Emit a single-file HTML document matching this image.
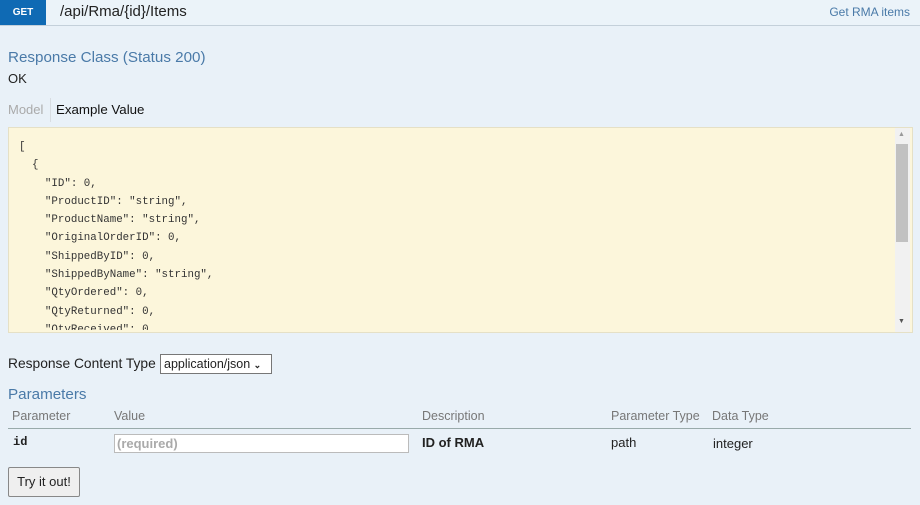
<!DOCTYPE html>
<html><head><style>
body{margin:0;width:920px;height:505px;background:#e9f1f8;font-family:"Liberation Sans",sans-serif;position:relative;overflow:hidden;color:#222}
.a{position:absolute;white-space:nowrap}
.code{font-family:"Liberation Mono",monospace;font-size:10.8px;color:#333;line-height:18.3px}
.h{color:#4a7aa8;font-size:15.2px}
.th{color:#777;font-size:12.5px}
</style></head><body>
<div class="a" style="left:0;top:0;width:920px;height:25px;background:#ebf3f9;border-bottom:1px solid #c4d0da"></div>
<div class="a" style="left:0;top:0;width:46px;height:25px;background:#0f6ab4;color:#fff;font-size:10px;font-weight:bold;line-height:25px;text-align:center">GET</div>
<div class="a" style="left:60px;top:3px;font-size:15px;color:#222">/api/Rma/{id}/Items</div>
<div class="a" style="right:10px;top:5px;font-size:12px;color:#4a7aa8">Get RMA items</div>
<div class="a h" style="left:8px;top:49px">Response Class (Status 200)</div>
<div class="a" style="left:8px;top:71px;font-size:13px">OK</div>
<div class="a" style="left:8px;top:102px;font-size:13px;color:#aaa">Model</div>
<div class="a" style="left:50px;top:98px;width:1px;height:24px;background:#d8dde2"></div>
<div class="a" style="left:56px;top:102px;font-size:13.3px;color:#111">Example Value</div>
<div class="a" style="left:8px;top:127px;width:903px;height:204px;background:#fcf6db;border:1px solid #e5e0c6"></div>
<div class="a" style="left:895px;top:128px;width:15px;height:204px;background:#f1f1f1"></div>
<div class="a" style="left:896px;top:144px;width:12px;height:98px;background:#c1c1c1"></div>
<div class="a" style="left:898px;top:131px;font-size:7px;color:#999">▲</div>
<div class="a" style="left:898px;top:318px;font-size:7px;color:#555">▼</div>
<div class="a code" style="left:19px;top:138px;height:192px;overflow:hidden;white-space:pre">[
  {
    "ID": 0,
    "ProductID": "string",
    "ProductName": "string",
    "OriginalOrderID": 0,
    "ShippedByID": 0,
    "ShippedByName": "string",
    "QtyOrdered": 0,
    "QtyReturned": 0,
    "QtyReceived": 0,</div>
<div class="a" style="left:8px;top:356px;font-size:13.8px;color:#222">Response Content Type</div>
<div class="a" style="left:160px;top:354px;width:107px;height:18px;border:1px solid #777;background:#fff;font-size:12.5px;line-height:18px;padding-left:3px">application/json <span style="font-size:9px;font-weight:bold">&#x2304;</span></div>
<div class="a h" style="left:8px;top:386px">Parameters</div>
<div class="a th" style="left:12px;top:409px">Parameter</div>
<div class="a th" style="left:114px;top:409px">Value</div>
<div class="a th" style="left:422px;top:409px">Description</div>
<div class="a th" style="left:611px;top:409px">Parameter Type</div>
<div class="a th" style="left:712px;top:409px">Data Type</div>
<div class="a" style="left:8px;top:428px;width:903px;height:1px;background:#9aa"></div>
<div class="a" style="left:13px;top:435px;font-family:'Liberation Mono',monospace;font-size:12px;font-weight:bold">id</div>
<div class="a" style="left:114px;top:434px;width:291px;height:17px;border:1px solid #bbb;background:#fff;font-size:13px;font-weight:bold;color:#aaa;line-height:17px;padding-left:2px">(required)</div>
<div class="a" style="left:422px;top:435px;font-size:13px;font-weight:bold;color:#222">ID of RMA</div>
<div class="a" style="left:611px;top:435px;font-size:13px;color:#222">path</div>
<div class="a" style="left:713px;top:436px;font-size:13px;color:#222">integer</div>
<div class="a" style="left:8px;top:467px;width:70px;height:28px;border:1px solid #888;border-radius:2px;background:#efefef;font-size:13px;line-height:28px;text-align:center">Try it out!</div>
</body></html>
